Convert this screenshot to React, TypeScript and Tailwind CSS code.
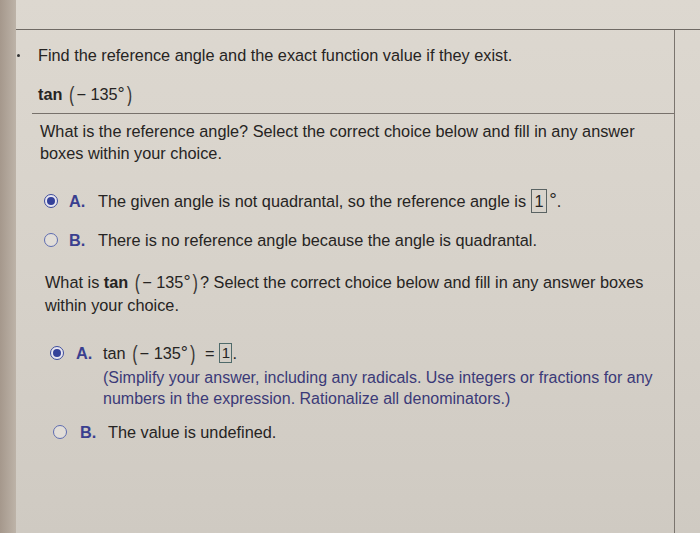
import React from "react"

function Radio({ checked }: { checked?: boolean }) {
  return checked ? (
    <span className="flex items-center justify-center w-[14px] h-[14px] rounded-full border-[1.5px] border-[#3d4c9c] bg-[#e8e6f0]">
      <span className="w-[8px] h-[8px] rounded-full bg-[#34419a]" />
    </span>
  ) : (
    <span className="w-[14px] h-[14px] rounded-full border-[1.5px] border-[#5e6cb0] bg-[#e2ded8]" />
  )
}

function Paren({ children }: { children: React.ReactNode }) {
  return <span className="inline-block scale-y-[1.3] font-light text-[#3a3836] px-[2px]">{children}</span>
}

function Angle() {
  return (
    <>
      <Paren>(</Paren>− 135<span className="text-[1.1em]">°</span>
      <Paren>)</Paren>
    </>
  )
}

export default function App() {
  return (
    <div className="w-[700px] h-[533px] flex overflow-hidden bg-gradient-to-b from-[#ddd8d0] via-[#d7d2ca] to-[#cfcac2] font-['Liberation_Sans',Arial,sans-serif] text-[16.3px] text-[#262423]">
      {/* left dark strip */}
      <div className="w-[16px] shrink-0 bg-gradient-to-r from-[#a5988c] to-[#bdb3a8]" />

      <div className="flex-1 flex flex-col">
        <div className="h-[30px] shrink-0 border-b border-[#6f6a64]" />

        <div className="flex flex-1">
          <div className="w-[659px] shrink-0 border-r border-[#7a746e]">
            {/* question header */}
            <div className="mt-[15px] flex items-center h-[20px] leading-[20px]">
              <span className="w-[3px] h-[3px] ml-[1px] rounded-full bg-[#333]" />
              <span className="ml-[18px] whitespace-nowrap">
                Find the reference angle and the exact function value if they exist.
              </span>
            </div>
            <div className="mt-[19px] ml-[22px] h-[20px] leading-[20px] whitespace-nowrap">
              <span className="font-bold">tan</span> <Angle />
            </div>
            <div className="mt-[9px] ml-[16px] border-t border-[#77716b]" />

            {/* part 1 */}
            <div className="mt-[6px] ml-[24px] leading-[22px] whitespace-nowrap">
              What is the reference angle? Select the correct choice below and fill in any answer
              <br />
              boxes within your choice.
            </div>

            <div className="mt-[25px] ml-[28px] flex items-center h-[24px] whitespace-nowrap">
              <Radio checked />
              <span className="ml-[11px] w-[29px] font-bold text-[#3a3f8f]">A.</span>
              <span>The given angle is not quadrantal, so the reference angle is</span>
              <span className="ml-[5px] flex items-center justify-center w-[16px] h-[24px] border border-[#5a6363]">1</span>
              <span className="self-start -mt-[3px] ml-[2px] text-[19px]">°</span>
              <span>.</span>
            </div>

            <div className="mt-[16px] ml-[28px] flex items-center h-[22px] whitespace-nowrap">
              <Radio />
              <span className="ml-[11px] w-[29px] font-bold text-[#3a3f8f]">B.</span>
              <span>There is no reference angle because the angle is quadrantal.</span>
            </div>

            {/* part 2 */}
            <div className="mt-[20px] ml-[29px] leading-[23px] whitespace-nowrap">
              What is <span className="font-bold">tan</span> <Angle />? Select the correct choice below and fill in any answer boxes
              <br />
              within your choice.
            </div>

            <div className="mt-[25px] ml-[34px] flex items-center h-[22px] whitespace-nowrap">
              <Radio checked />
              <span className="ml-[12px] w-[27px] font-bold text-[#3a3f8f]">A.</span>
              <span>
                tan <Angle /> <span className="ml-[3px]">=</span>
              </span>
              <span className="ml-[5px] flex items-center justify-center w-[13px] h-[20px] border border-[#4f6a6a] text-[15px]">1</span>
              <span>.</span>
            </div>
            <div className="mt-[3px] ml-[87px] leading-[21px] whitespace-nowrap text-[16px] text-[#3b3a78]">
              (Simplify your answer, including any radicals. Use integers or fractions for any
              <br />
              numbers in the expression. Rationalize all denominators.)
            </div>

            <div className="mt-[12px] ml-[37px] flex items-center h-[22px] whitespace-nowrap">
              <Radio />
              <span className="ml-[13px] w-[28px] font-bold text-[#3a3f8f]">B.</span>
              <span>The value is undefined.</span>
            </div>
          </div>
          <div className="flex-1" />
        </div>
      </div>
    </div>
  )
}
